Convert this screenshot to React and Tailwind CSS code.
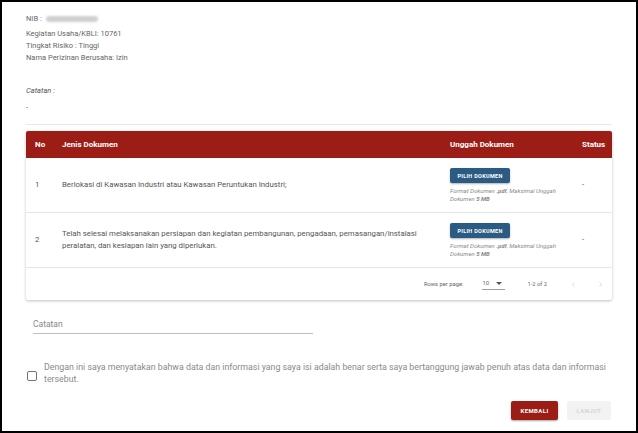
const docs = [
  { no: 1, name: "Berlokasi di Kawasan Industri atau Kawasan Peruntukan Industri;" },
  {
    no: 2,
    name: "Telah selesai melaksanakan persiapan dan kegiatan pembangunan, pengadaan, pemasangan/instalasi peralatan, dan kesiapan lain yang diperlukan.",
  },
];

const Chevron = ({ dir }) => (
  <svg width="7" height="7" viewBox="0 0 24 24" fill="none" stroke="#c8c8c8" strokeWidth="2.5">
    {dir === "left" ? <path d="M15 5l-7 7 7 7" /> : <path d="M9 5l7 7-7 7" />}
  </svg>
);

const App = () => {
  return (
    <div className="w-[638px] h-[433px] border-2 border-black bg-white px-[24px] pt-[11px] font-['Roboto','Liberation_Sans',sans-serif] text-[#666]">
      <div className="text-[7.5px] leading-[12px]">
        <div className="flex items-center">
          <span>NIB :</span>
          <span className="ml-[4px] w-[52px] h-[6px] bg-[#cfcfcf] blur-[1px] rounded-full" />
        </div>
        <div className="mt-[3px]">Kegiatan Usaha/KBLI: 10761</div>
        <div>Tingkat Risiko : Tinggi</div>
        <div>Nama Perizinan Berusaha: Izin</div>
        <div className="mt-[21px] italic text-[#555]">Catatan :</div>
        <div className="mt-[5px]">-</div>
      </div>
      <div className="mt-[10px] border-t border-[#e8e8e8]" />

      <div className="mt-[6px] bg-white rounded-[2px] shadow-[0_1px_3px_rgba(0,0,0,0.25)]">
        <div className="grid grid-cols-[36px_388px_132px_1fr] h-[27px] items-center bg-[#9b1d16] text-white font-bold text-[8px] rounded-t-[2px]">
          <div className="pl-[9px]">No</div>
          <div>Jenis Dokumen</div>
          <div>Unggah Dokumen</div>
          <div>Status</div>
        </div>
        {docs.map((d) => (
          <div
            key={d.no}
            className="grid grid-cols-[36px_388px_132px_1fr] h-[55px] items-center border-b border-[#e6e6e6] text-[7.8px] leading-[12px] text-[#555]"
          >
            <div className="pl-[9px]">{d.no}</div>
            <div className="pr-[10px]">{d.name}</div>
            <div className="pt-[1px]">
              <div className="w-[60px] h-[15px] bg-[#2b5a83] rounded-[2px] text-white font-bold text-[5.5px] tracking-[0.3px] flex items-center justify-center shadow-[0_1px_2px_rgba(0,0,0,0.3)]">
                PILIH DOKUMEN
              </div>
              <div className="mt-[4px] w-[112px] italic text-[6px] leading-[8px] text-[#8a8a8a]">
                Format Dokumen <b>.pdf</b>, Maksimal Unggah Dokumen <b>5 MB</b>
              </div>
            </div>
            <div>-</div>
          </div>
        ))}
        <div className="flex items-center h-[32px] text-[5.8px] text-[#666] pr-[8px]">
          <span className="ml-auto">Rows per page:</span>
          <div className="ml-[19px] w-[23px] h-[12px] flex items-center justify-between border-b border-[#9e9e9e] pb-[1px]">
            <span>10</span>
            <svg width="6" height="3" viewBox="0 0 10 5" className="mr-[3px]">
              <path d="M0 0l5 5 5-5z" fill="#555" />
            </svg>
          </div>
          <span className="ml-[22px]">1-2 of 2</span>
          <span className="ml-[23px] flex">
            <Chevron dir="left" />
          </span>
          <span className="ml-[20px] flex">
            <Chevron dir="right" />
          </span>
        </div>
      </div>

      <div className="mt-[18px] ml-[7px] w-[280px] border-b border-[#bdbdbd] pb-[3px] text-[8.5px] leading-[12px] text-[#888]">
        Catatan
      </div>

      <div className="mt-[27px] flex items-center text-[8.8px] leading-[12px] text-[#8a8a8a]">
        <span className="ml-[1px] w-[10px] h-[10px] shrink-0 border-[1.5px] border-[#757575] rounded-[2px] mt-[5px]" />
        <span className="ml-[7px]">
          Dengan ini saya menyatakan bahwa data dan informasi yang saya isi adalah benar serta saya bertanggung jawab penuh atas data dan informasi tersebut.
        </span>
      </div>

      <div className="mt-[16px] flex justify-end gap-[9px] pr-[1px]">
        <div className="w-[47px] h-[19px] bg-[#9b1d16] rounded-[2px] text-white font-bold text-[6px] tracking-[0.4px] flex items-center justify-center shadow-[0_1px_2px_rgba(0,0,0,0.35)]">
          KEMBALI
        </div>
        <div className="w-[44px] h-[19px] bg-[#f2f2f2] rounded-[2px] text-[#d6d6d6] font-bold text-[6px] tracking-[0.4px] flex items-center justify-center">
          LANJUT
        </div>
      </div>
    </div>
  );
};

export default App;
